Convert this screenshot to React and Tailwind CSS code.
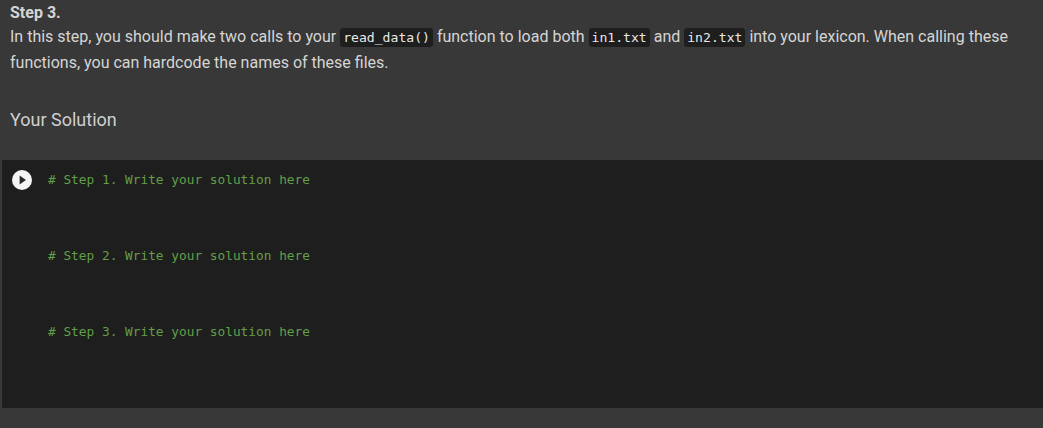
function Code({ children }) {
  return (
    <code className="rounded-[3px] bg-[#1e1e1e] px-[3px] py-[2px] font-['DejaVu_Sans_Mono',monospace] text-[13.1px] leading-none text-[#e8e8e8]">
      {children}
    </code>
  );
}

function Play() {
  return (
    <svg width="20" height="20" viewBox="0 0 20 20" className="block">
      <circle cx="10" cy="10" r="10" fill="#f5f5f5" />
      <path d="M7.6 5.6 L14 10 L7.6 14.4 Z" fill="#2a2a2a" />
    </svg>
  );
}

export default function App() {
  return (
    <div className="flex h-[428px] w-[1043px] flex-col overflow-hidden bg-[#383838] font-['Roboto',sans-serif] text-[#d5d5d5]">
      <div className="px-[10px]">
        <div className="pt-[1px] text-[16px] font-bold leading-[23px]">Step 3.</div>
        <p className="text-[16px] leading-[26px]">
          In this step, you should make two calls to your <Code>read_data()</Code> function to load both{" "}
          <Code>in1.txt</Code> and <Code>in2.txt</Code> into your lexicon. When calling these functions, you can
          hardcode the names of these files.
        </p>
        <h2 className="mt-[31px] text-[18px] font-normal leading-[26px] text-[#cfcfcf]">Your Solution</h2>
      </div>
      <div className="mt-[27px] ml-[2px] flex h-[248px] bg-[#1e1e1e] pt-[10px]">
        <div className="w-[46px] pl-[10px]">
          <Play />
        </div>
        <pre className="font-['DejaVu_Sans_Mono',monospace] text-[12.8px] leading-[19px] text-[#629f48]">
{`# Step 1. Write your solution here



# Step 2. Write your solution here



# Step 3. Write your solution here`}
        </pre>
      </div>
    </div>
  );
}
